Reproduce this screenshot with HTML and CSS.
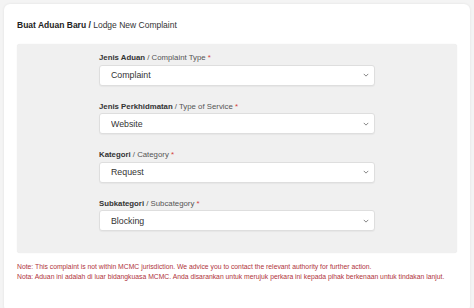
FILE: index.html
```html
<!DOCTYPE html>
<html lang="en">
  <head>
    <meta charset="UTF-8" />
    <meta name="viewport" content="width=device-width, initial-scale=1.0" />
    <title>Lodge New Complaint</title>
    <link rel="stylesheet" href="styles.css">
  </head>
  <body>
    <div class="card">
      <h1 class="title"><b>Buat Aduan Baru /</b> Lodge New Complaint</h1>

      <form class="panel">
        <div class="field">
          <label for="type"><b>Jenis Aduan</b> / Complaint Type <span class="req">*</span></label>
          <div class="select-wrap">
            <select id="type">
              <option>Complaint</option>
            </select>
            <svg class="chevron" viewBox="0 0 8 5" width="6" height="4"><path d="M1 1l3 3 3-3" fill="none" stroke="#777" stroke-width="1.2"/></svg>
          </div>
        </div>

        <div class="field">
          <label for="service"><b>Jenis Perkhidmatan</b> / Type of Service <span class="req">*</span></label>
          <div class="select-wrap">
            <select id="service">
              <option>Website</option>
            </select>
            <svg class="chevron" viewBox="0 0 8 5" width="6" height="4"><path d="M1 1l3 3 3-3" fill="none" stroke="#777" stroke-width="1.2"/></svg>
          </div>
        </div>

        <div class="field">
          <label for="category"><b>Kategori</b> / Category <span class="req">*</span></label>
          <div class="select-wrap">
            <select id="category">
              <option>Request</option>
            </select>
            <svg class="chevron" viewBox="0 0 8 5" width="6" height="4"><path d="M1 1l3 3 3-3" fill="none" stroke="#777" stroke-width="1.2"/></svg>
          </div>
        </div>

        <div class="field">
          <label for="subcategory"><b>Subkategori</b> / Subcategory <span class="req">*</span></label>
          <div class="select-wrap">
            <select id="subcategory">
              <option>Blocking</option>
            </select>
            <svg class="chevron" viewBox="0 0 8 5" width="6" height="4"><path d="M1 1l3 3 3-3" fill="none" stroke="#777" stroke-width="1.2"/></svg>
          </div>
        </div>
      </form>

      <div class="notes">
        <p>Note: This complaint is not within MCMC jurisdiction. We advice you to contact the relevant authority for further action.</p>
        <p>Nota: Aduan ini adalah di luar bidangkuasa MCMC. Anda disarankan untuk merujuk perkara ini kepada pihak berkenaan untuk tindakan lanjut.</p>
      </div>
    </div>
  </body>
</html>
```

FILE: styles.css
```css
body {
  font-family: "Liberation Sans", Arial, sans-serif;
  background-color: #f4f4f4;
  margin: 0;
  padding: 4px;
  color: #333;
}

.card {
  background-color: #fff;
  border-radius: 6px;
  box-shadow: 0 0 3px rgba(0, 0, 0, 0.08);
  padding: 15px 13px 20px;
}

.title {
  font-size: 8.5px;
  line-height: 12px;
  font-weight: normal;
  margin: 0 0 13px;
  color: #333;
}

.title b {
  color: #222;
}

.panel {
  background-color: #f0f0f0;
  border-radius: 3px;
  box-shadow: 0 0 1px rgba(0, 0, 0, 0.12);
  padding: 9px 0 22px;
  display: flex;
  flex-direction: column;
  align-items: center;
}

.field {
  width: 276px;
  margin-bottom: 16px;
}

.field:last-child {
  margin-bottom: 0;
}

label {
  display: block;
  font-size: 7.8px;
  line-height: 10px;
  margin-bottom: 1px;
  color: #555;
}

label b {
  color: #333;
}

.req {
  color: #d43f3a;
}

.select-wrap {
  position: relative;
}

select {
  -webkit-appearance: none;
  appearance: none;
  width: 100%;
  height: 21px;
  padding: 0 10px 0 11px;
  border: 1px solid #dedede;
  border-radius: 3px;
  background-color: #fff;
  box-shadow: 0 1px 1px rgba(0, 0, 0, 0.04);
  font-family: inherit;
  font-size: 8.8px;
  color: #333;
  box-sizing: border-box;
}

.chevron {
  position: absolute;
  right: 6px;
  top: 9px;
}

.notes {
  margin-top: 9px;
  padding-bottom: 10px;
}

.notes p {
  margin: 0;
  font-size: 6.8px;
  line-height: 10px;
  color: #b0343c;
}
```
